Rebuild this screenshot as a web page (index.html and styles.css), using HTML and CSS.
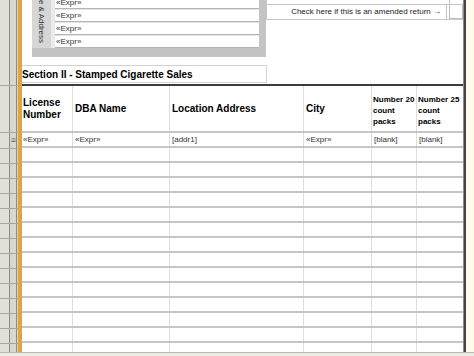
FILE: index.html
```html
<!DOCTYPE html>
<html>
<head>
<meta charset="utf-8">
<link rel="stylesheet" href="styles.css">
</head>
<body>
<div class="screen">
  <div class="gutter">
    <div class="g-top"></div>
    <div class="g-head"></div>
    <div class="g-row"><span class="grip">≡</span></div>
    <div class="g-row"></div><div class="g-row"></div><div class="g-row"></div><div class="g-row"></div>
    <div class="g-row"></div><div class="g-row"></div><div class="g-row"></div><div class="g-row"></div>
    <div class="g-row"></div><div class="g-row"></div><div class="g-row"></div><div class="g-row"></div>
    <div class="g-row"></div><div class="g-row"></div>
  </div>
  <div class="orange"></div>
  <div class="sheet">
    <div class="top">
      <div class="upper">
        <div class="namebox">
          <div class="label"><span>Name &amp; Address</span></div>
          <div class="fields">
            <div class="field">«Expr»</div>
            <div class="field">«Expr»</div>
            <div class="field">«Expr»</div>
            <div class="field">«Expr»</div>
            <div class="field">«Expr»</div>
            <div class="field">«Expr»</div>
          </div>
        </div>
        <div class="checkarea">
          <div class="check-prev"><div class="cp-a"></div><div class="cp-b"></div></div>
          <div class="check-row">
            <div class="check-text">Check here if this is an amended return →</div>
            <div class="check-box"></div>
          </div>
        </div>
      </div>
      <div class="section-title">Section II - Stamped Cigarette Sales</div>
    </div>
    <div class="table">
      <div class="row head">
        <div class="cell">License Number</div>
        <div class="cell">DBA Name</div>
        <div class="cell">Location Address</div>
        <div class="cell">City</div>
        <div class="cell small">Number 20 count packs</div>
        <div class="cell small">Number 25 count packs</div>
      </div>
      <div class="row data">
        <div class="cell">«Expr»</div>
        <div class="cell">«Expr»</div>
        <div class="cell">[addr1]</div>
        <div class="cell">«Expr»</div>
        <div class="cell">[blank]</div>
        <div class="cell">[blank]</div>
      </div>
      <div class="row"><div class="cell"></div><div class="cell"></div><div class="cell"></div><div class="cell"></div><div class="cell"></div><div class="cell"></div></div>
      <div class="row"><div class="cell"></div><div class="cell"></div><div class="cell"></div><div class="cell"></div><div class="cell"></div><div class="cell"></div></div>
      <div class="row"><div class="cell"></div><div class="cell"></div><div class="cell"></div><div class="cell"></div><div class="cell"></div><div class="cell"></div></div>
      <div class="row"><div class="cell"></div><div class="cell"></div><div class="cell"></div><div class="cell"></div><div class="cell"></div><div class="cell"></div></div>
      <div class="row"><div class="cell"></div><div class="cell"></div><div class="cell"></div><div class="cell"></div><div class="cell"></div><div class="cell"></div></div>
      <div class="row"><div class="cell"></div><div class="cell"></div><div class="cell"></div><div class="cell"></div><div class="cell"></div><div class="cell"></div></div>
      <div class="row"><div class="cell"></div><div class="cell"></div><div class="cell"></div><div class="cell"></div><div class="cell"></div><div class="cell"></div></div>
      <div class="row"><div class="cell"></div><div class="cell"></div><div class="cell"></div><div class="cell"></div><div class="cell"></div><div class="cell"></div></div>
      <div class="row"><div class="cell"></div><div class="cell"></div><div class="cell"></div><div class="cell"></div><div class="cell"></div><div class="cell"></div></div>
      <div class="row"><div class="cell"></div><div class="cell"></div><div class="cell"></div><div class="cell"></div><div class="cell"></div><div class="cell"></div></div>
      <div class="row"><div class="cell"></div><div class="cell"></div><div class="cell"></div><div class="cell"></div><div class="cell"></div><div class="cell"></div></div>
      <div class="row"><div class="cell"></div><div class="cell"></div><div class="cell"></div><div class="cell"></div><div class="cell"></div><div class="cell"></div></div>
      <div class="row"><div class="cell"></div><div class="cell"></div><div class="cell"></div><div class="cell"></div><div class="cell"></div><div class="cell"></div></div>
      <div class="row"><div class="cell"></div><div class="cell"></div><div class="cell"></div><div class="cell"></div><div class="cell"></div><div class="cell"></div></div>
    </div>
  </div>
  <div class="frame"></div>
  <div class="cream"></div>
</div>
<div class="bottom"></div>
</body>
</html>
```

FILE: styles.css
```css
html, body {
  margin: 0;
  padding: 0;
  width: 474px;
  height: 356px;
  overflow: hidden;
  background: #fdfbef;
  font-family: "Liberation Sans", Arial, sans-serif;
  color: #111;
}

.screen {
  display: flex;
  height: 352px;
  overflow: hidden;
}

/* left gutter */
.gutter {
  width: 18px;
  flex: none;
  display: flex;
  flex-direction: column;
  background: linear-gradient(to right,
    #e2dfd8 0 9px, #8a8a8a 9px 10px, #d9d6cf 10px 16px, #8a8a8a 16px 17px, #d9d6cf 17px 18px);
}
.g-top {
  height: 85px;
  flex: none;
  border-bottom: 1px solid #a8a6a0;
}
.g-head {
  height: 46px;
  flex: none;
  border-bottom: 1px solid #a8a6a0;
}
.g-row {
  height: 14px;
  flex: none;
  border-bottom: 1px solid #a8a6a0;
  display: flex;
  align-items: center;
  justify-content: flex-end;
}
.g-row:nth-child(3) { height: 15px; }
.grip {
  font-size: 9px;
  line-height: 9px;
  color: #666;
  width: 7px;
  text-align: center;
  margin-right: 1px;
}

.orange {
  width: 4px;
  flex: none;
  background: #e3a43c;
}

.sheet {
  width: 441px;
  flex: none;
  background: #fff;
  overflow: hidden;
}

/* top section */
.top {
  height: 84px;
  border-bottom: 2px solid #3c3c3c;
  overflow: hidden;
  display: flex;
  flex-direction: column;
}
.upper {
  height: 57px;
  flex: none;
  display: flex;
  align-items: flex-end;
}
.namebox {
  margin-left: 10px;
  width: 234px;
  height: 87px;
  flex: none;
  box-sizing: border-box;
  background: #c4c4c4;
  padding: 0 7px 9px 0;
  display: flex;
}
.label {
  width: 19px;
  background: #d6d6d6;
  display: flex;
  align-items: center;
  justify-content: center;
}
.label span {
  writing-mode: vertical-rl;
  font-size: 8px;
  color: #333;
  white-space: nowrap;
  margin-top: 8px;
}
.fields {
  flex: 1;
  background: #fff;
  border-left: 4px solid #ebebeb;
  display: flex;
  flex-direction: column;
}
.field {
  height: 13px;
  box-sizing: border-box;
  border-top: 1px solid #e4e4e4;
  border-bottom: 1px solid #b4b4b4;
  font-size: 8px;
  line-height: 11px;
  padding-left: 1px;
  color: #333;
}

.checkarea {
  flex: 1;
  align-self: flex-start;
  height: 57px;
  display: flex;
  flex-direction: column;
}
.check-prev {
  height: 4px;
  border-bottom: 1px solid #c4c4c4;
  display: flex;
}
.cp-a { flex: 1; border-left: 1px solid #c4c4c4; }
.cp-b { width: 13px; border-left: 1px solid #c4c4c4; }
.check-row {
  height: 14px;
  display: flex;
  border-bottom: 1px solid #c8c8c8;
}
.check-text {
  flex: 1;
  border-left: 1px solid #c4c4c4;
  border-right: 1px solid #c4c4c4;
  font-size: 8px;
  line-height: 14px;
  text-align: right;
  padding-right: 5px;
  color: #222;
}
.check-box {
  width: 12px;
  margin-left: 2px;
  border: 1px solid #bcbcbc;
  border-top: none;
}

.section-title {
  margin-top: 8px;
  width: 245px;
  height: 18px;
  box-sizing: border-box;
  border: 1px solid #d2d2d2;
  border-left: none;
  font-size: 10px;
  font-weight: bold;
  line-height: 17px;
  padding-left: 0;
  color: #000;
}

/* table */
.row {
  display: grid;
  grid-template-columns: 51px 97px 134px 68px 45px 46px;
  height: 15px;
  box-sizing: border-box;
  border-bottom: 2px solid #c6c6c6;
}
.cell {
  border-right: 1px solid #dedede;
  padding-left: 1px;
  overflow: hidden;
}
.cell:last-child { border-right: none; }

.row.head {
  height: 47px;
}
.head .cell {
  display: flex;
  align-items: center;
  font-size: 10px;
  line-height: 12px;
  font-weight: bold;
  color: #000;
  padding-left: 1px;
  padding-right: 1px;
}
.head .cell:nth-child(2),
.head .cell:nth-child(3),
.head .cell:nth-child(4) { padding-left: 2px; }
.head .cell.small {
  font-size: 8px;
  line-height: 11px;
  padding-top: 3px;
}
.data .cell {
  font-size: 8px;
  line-height: 13px;
  color: #333;
}
.data .cell:nth-child(n+2) { padding-left: 2px; }

.frame {
  width: 3px;
  flex: none;
  background: linear-gradient(to right, #8c8c8c 0 1px, #444 1px 3px);
}
.cream {
  flex: 1;
  background: #fefbec;
}

.bottom {
  height: 4px;
  border-top: 1px solid #b8b8b8;
  background: #eeebe2;
}
```
